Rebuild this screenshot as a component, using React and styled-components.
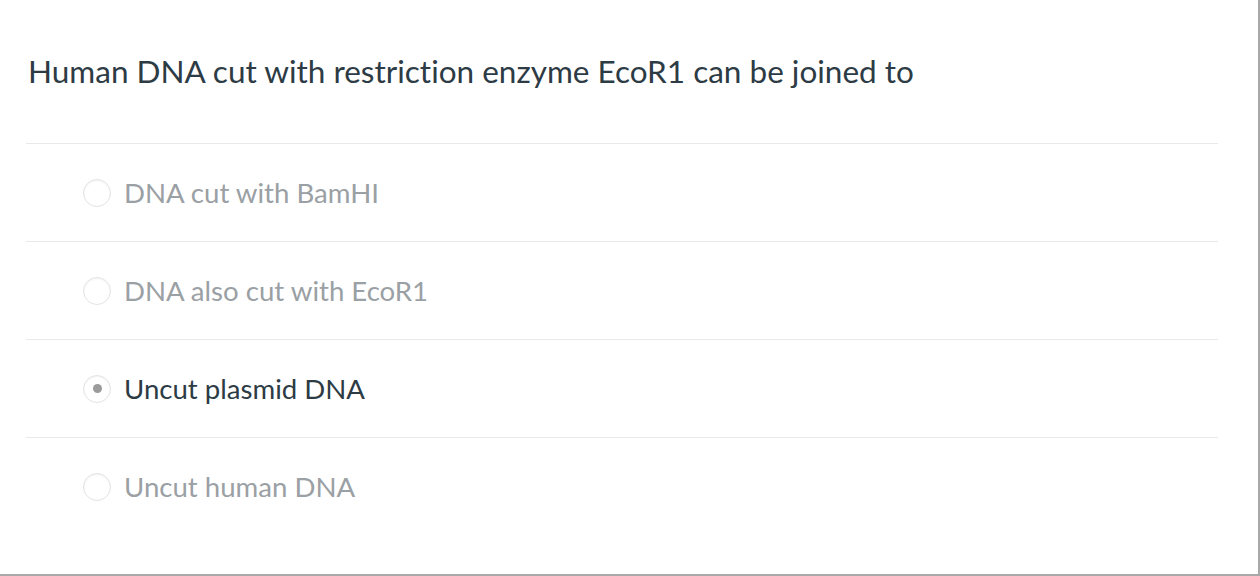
import React from 'react';
import styled, { createGlobalStyle } from 'styled-components';

const GlobalStyle = createGlobalStyle`
  html, body {
    margin: 0;
    padding: 0;
    background: #ffffff;
  }
  body {
    font-family: Lato, "Open Sans", sans-serif;
    font-variant-ligatures: none;
  }
`;

const answers = [
  { id: 'a', label: 'DNA cut with BamHI', selected: false },
  { id: 'b', label: 'DNA also cut with EcoR1', selected: false },
  { id: 'c', label: 'Uncut plasmid DNA', selected: true },
  { id: 'd', label: 'Uncut human DNA', selected: false },
];

function App() {
  return (
    <>
      <GlobalStyle />
      <StyleCard>
        <StyleQuestion>
          Human DNA cut with restriction enzyme EcoR1 can be joined to
        </StyleQuestion>
        <StyleList>
          {answers.map((a) => (
            <StyleRow key={a.id}>
              <StyleRadio $selected={a.selected} />
              <StyleLabel $selected={a.selected}>{a.label}</StyleLabel>
            </StyleRow>
          ))}
        </StyleList>
      </StyleCard>
    </>
  );
}

const StyleCard = styled.div`
  box-sizing: border-box;
  width: 1260px;
  height: 576px;
  padding: 0 40px 0 26px;
  background: #ffffff;
  border-right: 2px solid #a9a9a9;
  border-bottom: 2px solid #a9a9a9;
`;

const StyleQuestion = styled.div`
  height: 143px;
  padding-left: 2px;
  padding-bottom: 2px;
  box-sizing: border-box;
  display: flex;
  align-items: center;

  font-size: 31.5px;
  color: #2d3b45;
`;

const StyleList = styled.div`
  display: flex;
  flex-direction: column;
`;

const StyleRow = styled.div`
  height: 97px;
  border-top: 1px solid #e9e9e9;
  padding-left: 57px;

  display: flex;
  align-items: center;
  gap: 13px;

  cursor: pointer;
`;

const StyleRadio = styled.span`
  box-sizing: border-box;
  width: 28px;
  height: 28px;
  border-radius: 50%;
  border: 1px solid #e3e3e3;
  box-shadow: inset 0 1px 2px rgba(0, 0, 0, 0.05);
  background: #ffffff;
  flex-shrink: 0;

  display: flex;
  justify-content: center;
  align-items: center;

  &::after {
    content: '';
    display: ${(p) => (p.$selected ? 'block' : 'none')};
    width: 9px;
    height: 9px;
    border-radius: 50%;
    background: #9b9b9b;
  }
`;

const StyleLabel = styled.span`
  font-size: 27.6px;
  color: ${(p) => (p.$selected ? '#2d3b45' : '#9aa0a4')};
`;

export default App;
